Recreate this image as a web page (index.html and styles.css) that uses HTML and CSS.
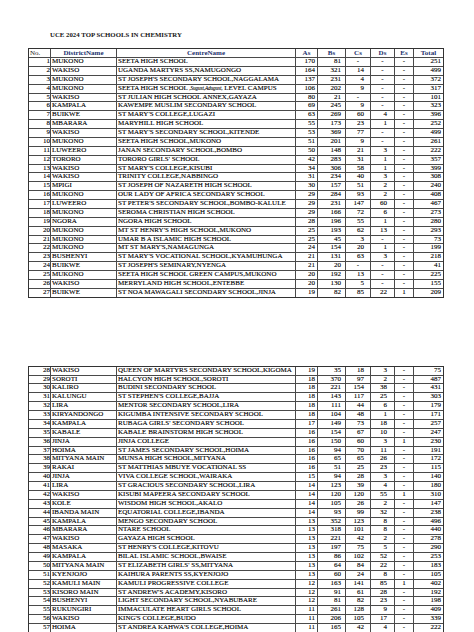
FILE: index.html
```html
<!DOCTYPE html>
<html>
<head>
<meta charset="utf-8">
<link rel="stylesheet" href="styles.css">
</head>
<body>
<div class="page">
<h1 class="title">UCE 2024 TOP SCHOOLS IN CHEMISTRY</h1>
<div class="grid first">
<span class="h h-no">No.</span><span class="h">DistrictName</span><span class="h">CentreName</span><span class="h">As</span><span class="h">Bs</span><span class="h">Cs</span><span class="h">Ds</span><span class="h">Es</span><span class="h">Total</span>
<span>1</span><span>MUKONO</span><span>SEETA HIGH SCHOOL</span><span>170</span><span>81</span><span class="z">-</span><span class="z">-</span><span class="z">-</span><span>251</span>
<span>2</span><span>WAKISO</span><span>UGANDA MARTYRS SS,NAMUGONGO</span><span>164</span><span>321</span><span>14</span><span class="z">-</span><span class="z">-</span><span>499</span>
<span>3</span><span>MUKONO</span><span>ST JOSEPH'S SECONDARY SCHOOL,NAGGALAMA</span><span>137</span><span>231</span><span>4</span><span class="z">-</span><span class="z">-</span><span>372</span>
<span>4</span><span>MUKONO</span><span>SEETA HIGH SCHOOL <i class="garble">,Sugust,Adugust,</i> LEVEL CAMPUS</span><span>106</span><span>202</span><span>9</span><span class="z">-</span><span class="z">-</span><span>317</span>
<span>5</span><span>WAKISO</span><span>ST JULIAN HIGH SCHOOL ANNEX,GAYAZA</span><span>80</span><span>21</span><span class="z">-</span><span class="z">-</span><span class="z">-</span><span>101</span>
<span>6</span><span>KAMPALA</span><span>KAWEMPE MUSLIM SECONDARY SCHOOL</span><span>69</span><span>245</span><span>9</span><span class="z">-</span><span class="z">-</span><span>323</span>
<span>7</span><span>BUIKWE</span><span>ST MARY'S COLLEGE,LUGAZI</span><span>63</span><span>269</span><span>60</span><span>4</span><span class="z">-</span><span>396</span>
<span>8</span><span>MBARARA</span><span>MARYHILL HIGH SCHOOL</span><span>55</span><span>173</span><span>23</span><span>1</span><span class="z">-</span><span>252</span>
<span>9</span><span>WAKISO</span><span>ST MARY'S SECONDARY SCHOOL,KITENDE</span><span>53</span><span>369</span><span>77</span><span class="z">-</span><span class="z">-</span><span>499</span>
<span>10</span><span>MUKONO</span><span>SEETA HIGH SCHOOL,MUKONO</span><span>51</span><span>201</span><span>9</span><span class="z">-</span><span class="z">-</span><span>261</span>
<span>11</span><span>LUWEERO</span><span>JANAN SECONDARY SCHOOL,BOMBO</span><span>50</span><span>148</span><span>21</span><span>3</span><span class="z">-</span><span>222</span>
<span>12</span><span>TORORO</span><span>TORORO GIRLS' SCHOOL</span><span>42</span><span>283</span><span>31</span><span>1</span><span class="z">-</span><span>357</span>
<span>13</span><span>WAKISO</span><span>ST MARY'S COLLEGE,KISUBI</span><span>34</span><span>306</span><span>58</span><span>1</span><span class="z">-</span><span>399</span>
<span>14</span><span>WAKISO</span><span>TRINITY COLLEGE,NABBINGO</span><span>31</span><span>234</span><span>40</span><span>3</span><span class="z">-</span><span>308</span>
<span>15</span><span>MPIGI</span><span>ST JOSEPH OF NAZARETH HIGH SCHOOL</span><span>30</span><span>157</span><span>51</span><span>2</span><span class="z">-</span><span>240</span>
<span>16</span><span>MUKONO</span><span>OUR LADY OF AFRICA SECONDARY SCHOOL</span><span>29</span><span>284</span><span>93</span><span>2</span><span class="z">-</span><span>408</span>
<span>17</span><span>LUWEERO</span><span>ST PETER'S SECONDARY SCHOOL,BOMBO-KALULE</span><span>29</span><span>231</span><span>147</span><span>60</span><span class="z">-</span><span>467</span>
<span>18</span><span>MUKONO</span><span>SEROMA CHRISTIAN HIGH SCHOOL</span><span>29</span><span>166</span><span>72</span><span>6</span><span class="z">-</span><span>273</span>
<span>19</span><span>NGORA</span><span>NGORA HIGH SCHOOL</span><span>28</span><span>196</span><span>55</span><span>1</span><span class="z">-</span><span>280</span>
<span>20</span><span>MUKONO</span><span>MT ST HENRY'S HIGH SCHOOL,MUKONO</span><span>25</span><span>193</span><span>62</span><span>13</span><span class="z">-</span><span>293</span>
<span>21</span><span>MUKONO</span><span>UMAR B A ISLAMIC HIGH SCHOOL</span><span>25</span><span>45</span><span>3</span><span class="z">-</span><span class="z">-</span><span>73</span>
<span>22</span><span>MUKONO</span><span>MT ST MARY'S,NAMAGUNGA</span><span>24</span><span>154</span><span>20</span><span>1</span><span class="z">-</span><span>199</span>
<span>23</span><span>BUSHENYI</span><span>ST MARY'S VOCATIONAL SCHOOL,KYAMUHUNGA</span><span>21</span><span>131</span><span>63</span><span>3</span><span class="z">-</span><span>218</span>
<span>24</span><span>BUIKWE</span><span>ST JOSEPH'S SEMINARY,NYENGA</span><span>21</span><span>20</span><span class="z">-</span><span class="z">-</span><span class="z">-</span><span>41</span>
<span>25</span><span>MUKONO</span><span>SEETA HIGH SCHOOL GREEN CAMPUS,MUKONO</span><span>20</span><span>192</span><span>13</span><span class="z">-</span><span class="z">-</span><span>225</span>
<span>26</span><span>WAKISO</span><span>MERRYLAND HIGH SCHOOL,ENTEBBE</span><span>20</span><span>130</span><span>5</span><span class="z">-</span><span class="z">-</span><span>155</span>
<span>27</span><span>BUIKWE</span><span>ST NOA MAWAGALI SECONDARY SCHOOL,JINJA</span><span>19</span><span>82</span><span>85</span><span>22</span><span>1</span><span>209</span>
</div>

<div class="grid second">
<span>28</span><span>WAKISO</span><span>QUEEN OF MARTYRS SECONDARY SCHOOL,KIGOMA</span><span>19</span><span>35</span><span>18</span><span>3</span><span class="z">-</span><span>75</span>
<span>29</span><span>SOROTI</span><span>HALCYON HIGH SCHOOL,SOROTI</span><span>18</span><span>370</span><span>97</span><span>2</span><span class="z">-</span><span>487</span>
<span>30</span><span>KALIRO</span><span>BUDINI SECONDARY SCHOOL</span><span>18</span><span>221</span><span>154</span><span>38</span><span class="z">-</span><span>431</span>
<span>31</span><span>KALUNGU</span><span>ST STEPHEN'S COLLEGE,BAJJA</span><span>18</span><span>143</span><span>117</span><span>25</span><span class="z">-</span><span>303</span>
<span>32</span><span>LIRA</span><span>MENTOR SECONDARY SCHOOL,LIRA</span><span>18</span><span>111</span><span>44</span><span>6</span><span class="z">-</span><span>179</span>
<span>33</span><span>KIRYANDONGO</span><span>KIGUMBA INTENSIVE SECONDARY SCHOOL</span><span>18</span><span>104</span><span>48</span><span>1</span><span class="z">-</span><span>171</span>
<span>34</span><span>KAMPALA</span><span>RUBAGA GIRLS' SECONDARY SCHOOL</span><span>17</span><span>149</span><span>73</span><span>18</span><span class="z">-</span><span>257</span>
<span>35</span><span>KABALE</span><span>KABALE BRAINSTORM HIGH SCHOOL</span><span>16</span><span>154</span><span>67</span><span>10</span><span class="z">-</span><span>247</span>
<span>36</span><span>JINJA</span><span>JINJA COLLEGE</span><span>16</span><span>150</span><span>60</span><span>3</span><span>1</span><span>230</span>
<span>37</span><span>HOIMA</span><span>ST JAMES SECONDARY SCHOOL,HOIMA</span><span>16</span><span>94</span><span>70</span><span>11</span><span class="z">-</span><span>191</span>
<span>38</span><span>MITYANA MAIN</span><span>MUNSA HIGH SCHOOL,MITYANA</span><span>16</span><span>65</span><span>65</span><span>26</span><span class="z">-</span><span>172</span>
<span>39</span><span>RAKAI</span><span>ST MATTHIAS MBUYE VOCATIONAL SS</span><span>16</span><span>51</span><span>25</span><span>23</span><span class="z">-</span><span>115</span>
<span>40</span><span>JINJA</span><span>VIVA COLLEGE SCHOOL,WAIRAKA</span><span>15</span><span>94</span><span>28</span><span>3</span><span class="z">-</span><span>140</span>
<span>41</span><span>LIRA</span><span>ST GRACIOUS SECONDARY SCHOOL,LIRA</span><span>14</span><span>123</span><span>39</span><span>4</span><span class="z">-</span><span>180</span>
<span>42</span><span>WAKISO</span><span>KISUBI MAPEERA SECONDARY SCHOOL</span><span>14</span><span>120</span><span>120</span><span>55</span><span>1</span><span>310</span>
<span>43</span><span>KOLE</span><span>WISDOM HIGH SCHOOL,AKALO</span><span>14</span><span>105</span><span>26</span><span>2</span><span class="z">-</span><span>147</span>
<span>44</span><span>IBANDA MAIN</span><span>EQUATORIAL COLLEGE,IBANDA</span><span>14</span><span>93</span><span>99</span><span>32</span><span class="z">-</span><span>238</span>
<span>45</span><span>KAMPALA</span><span>MENGO SECONDARY SCHOOL</span><span>13</span><span>352</span><span>123</span><span>8</span><span class="z">-</span><span>496</span>
<span>46</span><span>MBARARA</span><span>NTARE SCHOOL</span><span>13</span><span>318</span><span>101</span><span>8</span><span class="z">-</span><span>440</span>
<span>47</span><span>WAKISO</span><span>GAYAZA HIGH SCHOOL</span><span>13</span><span>221</span><span>42</span><span>2</span><span class="z">-</span><span>278</span>
<span>48</span><span>MASAKA</span><span>ST HENRY'S COLLEGE,KITOVU</span><span>13</span><span>197</span><span>75</span><span>5</span><span class="z">-</span><span>290</span>
<span>49</span><span>KAMPALA</span><span>BILAL ISLAMIC SCHOOL,BWAISE</span><span>13</span><span>86</span><span>102</span><span>52</span><span class="z">-</span><span>253</span>
<span>50</span><span>MITYANA MAIN</span><span>ST ELIZABETH GIRLS' SS,MITYANA</span><span>13</span><span>64</span><span>84</span><span>22</span><span class="z">-</span><span>183</span>
<span>51</span><span>KYENJOJO</span><span>KAIHURA PARENTS SS,KYENJOJO</span><span>13</span><span>60</span><span>24</span><span>8</span><span class="z">-</span><span>105</span>
<span>52</span><span>KAMULI MAIN</span><span>KAMULI PROGRESSIVE COLLEGE</span><span>12</span><span>163</span><span>141</span><span>85</span><span>1</span><span>402</span>
<span>53</span><span>KISORO MAIN</span><span>ST ANDREW'S ACADEMY,KISORO</span><span>12</span><span>91</span><span>61</span><span>28</span><span class="z">-</span><span>192</span>
<span>54</span><span>BUSHENYI</span><span>LIGHT SECONDARY SCHOOL,NYABUBARE</span><span>12</span><span>81</span><span>82</span><span>23</span><span class="z">-</span><span>198</span>
<span>55</span><span>RUKUNGIRI</span><span>IMMACULATE HEART GIRLS SCHOOL</span><span>11</span><span>261</span><span>128</span><span>9</span><span class="z">-</span><span>409</span>
<span>56</span><span>WAKISO</span><span>KING'S COLLEGE,BUDO</span><span>11</span><span>206</span><span>105</span><span>17</span><span class="z">-</span><span>339</span>
<span>57</span><span>HOIMA</span><span>ST ANDREA KAHWA'S COLLEGE,HOIMA</span><span>11</span><span>165</span><span>42</span><span>4</span><span class="z">-</span><span>222</span>
</div>
</div>
</body>
</html>
```
FILE: styles.css
```css
html, body {
  margin: 0;
  padding: 0;
  background: #ffffff;
}

.page {
  padding: 31px 0 0 28px;
  font-family: "Liberation Serif", "Times New Roman", serif;
  color: #1c1c1c;
  height: 632px;
  box-sizing: border-box;
  overflow: hidden;
}

.title {
  margin: 0 0 9px 22px;
  font-size: 6.8px;
  line-height: 8px;
  font-weight: bold;
  color: #151515;
}

.grid {
  display: grid;
  grid-template-columns: 21px 65px 178px 21px 27px 24px 23px 18px 29px;
  grid-auto-rows: 7.89px;
  gap: 1px;
  width: max-content;
  background: #4a4a4a;
  border: 1px solid #333;
  font-size: 7px;
}

.grid.first {
  grid-template-rows: 8px;
}

.grid.second {
  margin-top: 68px;
}

.grid > span {
  display: block;
  background: #ffffff;
  line-height: 7.9px;
  padding: 0 1px;
  white-space: nowrap;
  overflow: hidden;
  text-shadow: 0 0 0.4px rgba(0, 0, 0, 0.6);
}

.grid > span:nth-child(9n+1) { text-align: right; padding-right: 0; }
.grid > span:nth-child(9n+2),
.grid > span:nth-child(9n+3) { text-align: left; }
.grid > span:nth-child(9n+4) { text-align: right; padding-right: 2px; }
.grid > span:nth-child(9n+5) { text-align: right; padding-right: 4px; }
.grid > span:nth-child(9n+6) { text-align: right; padding-right: 6px; }
.grid > span:nth-child(9n+7) { text-align: right; padding-right: 7px; }
.grid > span:nth-child(9n+8) { text-align: center; }
.grid > span:nth-child(9n) { text-align: right; padding-right: 2px; }

.grid > span.z { text-align: center; padding-right: 1px; }

.grid > span.h {
  font-weight: bold;
  color: #23326e;
  text-align: center;
  text-shadow: none;
  line-height: 8px;
  padding-right: 1px;
}

.grid > span.h-no {
  text-align: left;
  font-weight: normal;
  color: #1c1c1c;
}

.garble {
  font-size: 5.2px;
  letter-spacing: -0.1px;
}
```
